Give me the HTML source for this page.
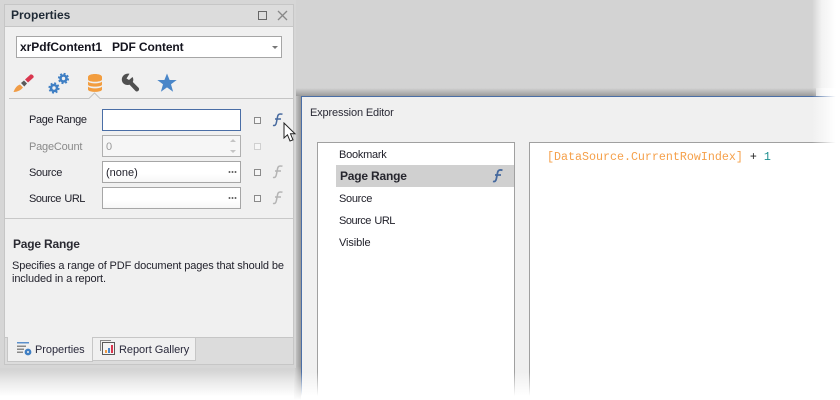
<!DOCTYPE html>
<html><head><meta charset="utf-8"><style>
html,body{margin:0;padding:0;width:840px;height:400px;overflow:hidden;background:#fff}
*{box-sizing:border-box}
#r{position:relative;width:840px;height:400px;overflow:hidden;font-family:"Liberation Sans",sans-serif;font-size:11px;color:#1e1e28}
.a{position:absolute}
.t{position:absolute;white-space:nowrap;line-height:14px}
.in{position:absolute;left:102px;width:139px;height:22px;background:linear-gradient(#fff 60%,#f6f6f6);border:1px solid #a6a6a6}
.sq{position:absolute;left:254px;width:7px;height:7px;border:1px solid #8a8a8a;background:#f6f6f6}
.f{position:absolute;fill:none;stroke:#b4b4b4;stroke-width:1.5}
.dots{position:absolute;left:228px;width:9px;height:2px;background:radial-gradient(circle,#666 0.9px,transparent 1.1px) 0 0/3px 2px repeat-x}
</style></head><body><div id="r">
<!-- backdrop -->
<div class="a" style="left:0;top:0;width:812px;height:100px;background:#d3d3d3"></div>
<div class="a" style="left:812px;top:0;width:24px;height:96px;background:linear-gradient(90deg,#d3d3d3,#f2f2f2 40%,#fff)"></div>
<div class="a" style="left:296px;top:88px;width:520px;height:8px;background:linear-gradient(#d3d3d3,#9a9a9a)"></div>
<div class="a" style="left:812px;top:88px;width:24px;height:8px;background:linear-gradient(90deg,rgba(255,255,255,0),#fff)"></div>
<div class="a" style="left:0;top:366px;width:302px;height:34px;background:linear-gradient(#d4d4d4,#d4d4d4 12%,#ececec 50%,#fff 90%)"></div>
<div class="a" style="left:294px;top:96px;width:8px;height:304px;background:linear-gradient(90deg,#d3d3d3,#8e8e8e)"></div>
<div class="a" style="left:294px;top:366px;width:8px;height:34px;background:linear-gradient(rgba(255,255,255,0),#fff)"></div>
<!-- panel -->
<div class="a" style="left:0;top:0;width:296px;height:368px;background:#d6d6d6"></div>
<div class="a" style="left:4px;top:4px;width:290px;height:361px;background:#f0f0f0;border:1px solid #c6c6c6"></div>
<div class="a" style="left:5px;top:5px;width:288px;height:22px;background:#dcdcdc;border-bottom:1px solid #c6c6c6"></div>
<div class="t" style="left:11px;top:8px;font-weight:bold;font-size:12px;color:#1f2a36">Properties</div>
<div class="a" style="left:258px;top:11px;width:9px;height:9px;border:1px solid #666"></div>
<svg class="a" style="left:277px;top:10px" width="11" height="11"><path d="M1 1L10 10M10 1L1 10" stroke="#888" stroke-width="1.3"/></svg>
<!-- combo -->
<div class="a" style="left:16px;top:36px;width:266px;height:22px;background:#fff;border:1px solid #a6a6a6"></div>
<div class="t" style="left:20px;top:40px;font-weight:bold;font-size:12px;color:#14141e;letter-spacing:-.05px">xrPdfContent1</div>
<div class="t" style="left:112px;top:40px;font-weight:bold;font-size:12px;color:#14141e;letter-spacing:-.1px">PDF Content</div>
<svg class="a" style="left:271px;top:45px" width="8" height="5"><path d="M1 1H7L4 4Z" fill="#777"/></svg>
<!-- tab icons -->
<svg class="a" style="left:12px;top:72px" width="24" height="22">
<path d="M1.500 20C3 16 5 13.500 8 12.500L11 15.500C9 18 6 19.800 1.500 20Z" fill="#f09c46"/>
<path d="M9 11L12 8.500L15 11.500L12.300 14.500Z" fill="#5a5a5a"/>
<path d="M13 7.500L18.500 2.500C19.500 2 21 3 21.500 4C22 5 21.500 5.500 21 6L16 10.500Z" fill="#d9364e"/>
</svg>
<svg class="a" style="left:48px;top:72px" width="24" height="22">
<g fill="none" stroke="#3f7fc4">
<circle cx="15.500" cy="6.500" r="3" stroke-width="2.600"/><circle cx="15.500" cy="6.500" r="4.800" stroke-width="1.600" stroke-dasharray="2 1.770"/>
<circle cx="6" cy="16" r="3" stroke-width="2.600"/><circle cx="6" cy="16" r="4.800" stroke-width="1.600" stroke-dasharray="2 1.770"/>
</g></svg>
<svg class="a" style="left:87px;top:73px" width="16" height="20">
<path d="M1 4C1 0 15 0 15 4V6.500C15 9.500 1 9.500 1 6.500Z" fill="#f29d3f"/>
<path d="M1 8.500C3 11 13 11 15 8.500V11.600C15 14.300 1 14.300 1 11.600Z" fill="#f29d3f"/>
<path d="M1 13.500C3 16 13 16 15 13.500V16.500C15 19.700 1 19.700 1 16.500Z" fill="#f29d3f"/>
</svg>
<svg class="a" style="left:121px;top:73px" width="20" height="20">
<path d="M8.500 .8C4.500 -.2 .8 2.700 .8 6.500C.8 9.800 3.500 12 6.500 12C7.300 12 8 11.900 8.500 11.600L14.500 18C16 19.500 19 17.500 17.800 15L11.800 9C12.500 7.500 12.500 5.500 11.500 4L8 7L5.500 5.500Z" fill="#505050"/>
</svg>
<svg class="a" style="left:157px;top:73px" width="20" height="20"><path d="M10 .5L12.600 7H19.700L14 11.300L16.100 18.700L10 14.400L3.900 18.700L6 11.300L.3 7H7.400Z" fill="#4a86c8"/></svg>
<!-- tab divider -->
<svg class="a" style="left:9px;top:92px" width="284" height="8"><path d="M0 6.500H80L85.500 1L91 6.500H284" fill="none" stroke="#c4c4c4" stroke-width="1"/></svg>
<!-- rows -->
<div class="t" style="left:29px;top:113px;letter-spacing:-.35px;font-size:11px">Page Range</div>
<div class="in" style="top:109px;border-color:#4a6ea6;background:#fff"></div>
<div class="sq" style="top:117px"></div>
<svg class="f" style="left:272px;top:113px;stroke:#46699e" width="12" height="14"><path d="M1 12.300C3 13 3.900 12 4.400 9.500L5.600 3.500C6.100 1.200 7.600 .5 10.500 1.200M3 6H9"/></svg>

<div class="t" style="left:29px;top:140px;color:#8a8a8a;letter-spacing:-.2px">PageCount</div>
<div class="in" style="top:135px;background:#f6f6f6;border-color:#b0b0b0"></div>
<div class="t" style="left:106px;top:140px;color:#9a9a9a">0</div>
<svg class="a" style="left:229px;top:138px" width="8" height="16"><path d="M1 4L4 1L7 4ZM1 12H7L4 15Z" fill="#c4c4c4"/></svg>
<div class="sq" style="top:143px;border-color:#d0d0d0"></div>

<div class="t" style="left:29px;top:166px;letter-spacing:-.3px">Source</div>
<div class="in" style="top:161px"></div>
<div class="t" style="left:106px;top:166px">(none)</div>
<div class="dots" style="top:171px"></div>
<div class="sq" style="top:169px"></div>
<svg class="f" style="left:272px;top:165px" width="12" height="14"><path d="M1 12.300C3 13 3.900 12 4.400 9.500L5.600 3.500C6.100 1.200 7.600 .5 10.500 1.200M3 6H9"/></svg>

<div class="t" style="left:29px;top:192px;letter-spacing:-.5px;word-spacing:1px">Source URL</div>
<div class="in" style="top:187px"></div>
<div class="dots" style="top:197px"></div>
<div class="sq" style="top:195px"></div>
<svg class="f" style="left:272px;top:191px" width="12" height="14"><path d="M1 12.300C3 13 3.900 12 4.400 9.500L5.600 3.500C6.100 1.200 7.600 .5 10.500 1.200M3 6H9"/></svg>

<div class="a" style="left:5px;top:218px;width:288px;height:1px;background:#c8c8c8"></div>
<div class="t" style="left:13px;top:237px;font-weight:bold;font-size:12px;color:#2a2a32;letter-spacing:-.2px">Page Range</div>
<div class="t" style="left:12px;top:259px;color:#22222c;letter-spacing:-.13px">Specifies a range of PDF document pages that should be</div>
<div class="t" style="left:12px;top:272px;color:#22222c;letter-spacing:-.13px">included in a report.</div>

<!-- bottom tabs -->
<div class="a" style="left:5px;top:337px;width:288px;height:27px;background:#dcdcdc;border-top:1px solid #c6c6c6"></div>
<div class="a" style="left:7px;top:337px;width:86px;height:25px;background:#f0f0f0;border:1px solid #c6c6c6;border-top:none"></div>
<div class="a" style="left:92px;top:337px;width:104px;height:24px;background:#f0f0f0;border:1px solid #c6c6c6"></div>
<svg class="a" style="left:16px;top:341px" width="17" height="16">
<path d="M1 1H13V2.500H1Z" fill="#5b8fca"/><path d="M1 4.500H10V6H1ZM1 7.500H8V9H1ZM1 10.500H7V12H1Z" fill="#888"/>
<circle cx="12" cy="11" r="2.200" fill="none" stroke="#3f7fc4" stroke-width="2.400"/>
</svg>
<div class="t" style="left:35px;top:343px;color:#2a2a3c;letter-spacing:-.05px">Properties</div>
<svg class="a" style="left:100px;top:340px" width="16" height="16">
<path d="M1 .5H11M.5 0V11" stroke="#888" fill="none"/>
<rect x="2.500" y="2.500" width="12" height="12" fill="#f4f4f4" stroke="#5a5a5a"/>
<rect x="5" y="10" width="2" height="3" fill="#f09c46"/><rect x="8" y="8" width="2" height="5" fill="#4a86c8"/><rect x="11" y="5" width="2" height="8" fill="#d9364e"/>
</svg>
<div class="t" style="left:119px;top:343px;color:#2a2a3c;letter-spacing:-.05px">Report Gallery</div>
<!-- dialog -->
<div class="a" style="left:301px;top:96px;width:539px;height:304px;background:#f0f0f0;border-top:1px solid #4a6ea6;border-left:1px solid #4a6ea6"></div>
<div class="t" style="left:310px;top:106px;color:#2a2a36;letter-spacing:-.15px">Expression Editor</div>
<div class="a" style="left:317px;top:142px;width:198px;height:260px;background:#fff;border:1px solid #a0a0a0"></div>
<div class="a" style="left:529px;top:142px;width:320px;height:260px;background:#fff;border:1px solid #a0a0a0"></div>
<div class="t" style="left:339px;top:148px;letter-spacing:-.25px">Bookmark</div>
<div class="a" style="left:336px;top:165px;width:178px;height:22px;background:#d0d0d0"></div>
<div class="t" style="left:340px;top:169px;font-weight:bold;font-size:12px;color:#26262e;letter-spacing:-.2px">Page Range</div>
<svg class="f" style="left:492px;top:169px;stroke:#46699e;stroke-width:1.800" width="12" height="14"><path d="M1 12.300C3 13 3.900 12 4.400 9.500L5.600 3.500C6.100 1.200 7.600 .5 10.500 1.200M3 6H9"/></svg>
<div class="t" style="left:339px;top:192px;letter-spacing:-.3px">Source</div>
<div class="t" style="left:339px;top:214px;letter-spacing:-.5px;word-spacing:1px">Source URL</div>
<div class="t" style="left:339px;top:236px;letter-spacing:-.1px">Visible</div>
<div class="t" style="left:547px;top:150px;font-family:'Liberation Mono',monospace;font-size:11.67px;color:#f5a04a">[DataSource.CurrentRowIndex] <span style="color:#222">+</span> <span style="color:#1f8f8f">1</span></div>
<!-- fades -->
<div class="a" style="left:812px;top:96px;width:28px;height:304px;background:linear-gradient(90deg,rgba(255,255,255,0),#fff 85%)"></div>
<div class="a" style="left:301px;top:372px;width:539px;height:24px;background:linear-gradient(rgba(255,255,255,0),#fff)"></div>
<div class="a" style="left:301px;top:396px;width:539px;height:4px;background:#fff"></div>
<!-- cursor -->
<svg class="a" style="left:283px;top:122px" width="14" height="21"><path d="M1 1V16L4.500 12.800L7 19L10 17.800L7.500 11.800H12Z" fill="#fff" stroke="#222" stroke-width="1"/></svg>
</div></body></html>
